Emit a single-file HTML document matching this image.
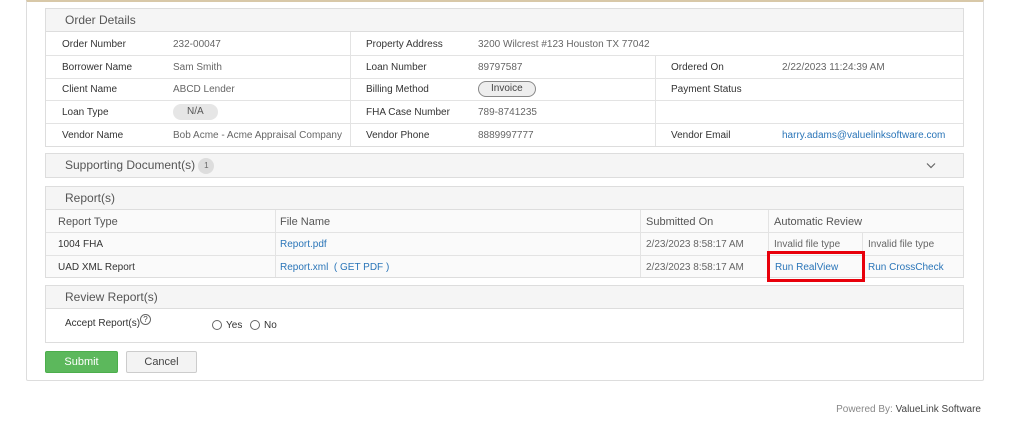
<!DOCTYPE html>
<html><head><style>
*{margin:0;padding:0;box-sizing:border-box}
body{width:1024px;height:428px;background:#fff;font-family:"Liberation Sans",sans-serif;font-size:10px;color:#444;position:relative;overflow:hidden}
.a{position:absolute}
.outer{left:26px;top:0;width:958px;height:381px;border:1px solid #ddd;border-top:2px solid #d8c8a8;border-radius:0 0 2px 2px}
.panel{position:absolute;left:45px;width:919px;border:1px solid #ddd;background:#fff}
.ph{height:23px;background:#f5f5f5;border-bottom:1px solid #ddd;padding-left:19px;line-height:23px;font-size:12px;color:#555}
.t{position:absolute;white-space:nowrap;margin-top:1px}
.lb{color:#333}
.v{color:#666}
.lk{color:#2a75b8}
.hl{position:absolute;height:1px;background:#e3e3e3}
.vl{position:absolute;width:1px;background:#e3e3e3}
.pill{display:inline-block;border-radius:10px;background:#e6e6e6;padding:0 14px;line-height:16px}
</style></head><body>
<div class="a outer"></div>

<div class="panel" style="top:8px;height:139px">
 <div class="ph">Order Details</div>
 <div class="hl" style="top:46px;left:0;width:917px"></div>
 <div class="hl" style="top:69px;left:0;width:917px"></div>
 <div class="hl" style="top:91px;left:0;width:917px"></div>
 <div class="hl" style="top:114px;left:0;width:917px"></div>
 <div class="vl" style="left:304px;top:23px;height:114px"></div>
 <div class="vl" style="left:609px;top:46px;height:91px"></div>
 <span class="t lb" style="left:16px;top:29px">Order Number</span><span class="t v" style="left:127px;top:29px">232-00047</span>
 <span class="t lb" style="left:320px;top:29px">Property Address</span><span class="t v" style="left:432px;top:29px">3200 Wilcrest #123 Houston TX 77042</span>
 <span class="t lb" style="left:16px;top:52px">Borrower Name</span><span class="t v" style="left:127px;top:52px">Sam Smith</span>
 <span class="t lb" style="left:320px;top:52px">Loan Number</span><span class="t v" style="left:432px;top:52px">89797587</span>
 <span class="t lb" style="left:625px;top:52px">Ordered On</span><span class="t v" style="left:736px;top:52px">2/22/2023 11:24:39 AM</span>
 <span class="t lb" style="left:16px;top:74px">Client Name</span><span class="t v" style="left:127px;top:74px">ABCD Lender</span>
 <span class="t lb" style="left:320px;top:74px">Billing Method</span><span class="t" style="left:432px;top:71px;border:1px solid #888;border-radius:9px;background:#eee;padding:0 12px;line-height:14px;color:#444">Invoice</span>
 <span class="t lb" style="left:625px;top:74px">Payment Status</span>
 <span class="t lb" style="left:16px;top:97px">Loan Type</span><span class="t pill" style="left:127px;top:94px;color:#555">N/A</span>
 <span class="t lb" style="left:320px;top:97px">FHA Case Number</span><span class="t v" style="left:432px;top:97px">789-8741235</span>
 <span class="t lb" style="left:16px;top:120px">Vendor Name</span><span class="t v" style="left:127px;top:120px">Bob Acme - Acme Appraisal Company</span>
 <span class="t lb" style="left:320px;top:120px">Vendor Phone</span><span class="t v" style="left:432px;top:120px">8889997777</span>
 <span class="t lb" style="left:625px;top:120px">Vendor Email</span><span class="t lk" style="left:736px;top:120px">harry.adams@valuelinksoftware.com</span>
</div>

<div class="panel" style="top:153px;height:25px">
 <div class="ph" style="border-bottom:0;background:#f5f5f5">Supporting Document(s) <span style="display:inline-block;width:16px;height:16px;border-radius:8px;background:#ddd;font-size:8px;text-align:center;line-height:16px;color:#666;vertical-align:1px">1</span></div>
 <svg class="a" style="left:880px;top:8px" width="10" height="7" viewBox="0 0 10 7"><path d="M1 1.5 L5 5.5 L9 1.5" fill="none" stroke="#666" stroke-width="1.2"/></svg>
</div>

<div class="panel" style="top:186px;height:92px">
 <div class="ph">Report(s)</div>
 <div class="a" style="left:0;top:23px;width:917px;height:67px;background:#fafafa"></div>
 <div class="hl" style="top:45px;left:0;width:917px"></div>
 <div class="hl" style="top:68px;left:0;width:917px"></div>
 <div class="vl" style="left:229px;top:23px;height:67px"></div>
 <div class="vl" style="left:594px;top:23px;height:67px"></div>
 <div class="vl" style="left:722px;top:23px;height:67px"></div>
 <div class="vl" style="left:816px;top:46px;height:44px"></div>
 <span class="t" style="left:12px;top:28px;font-size:11px;color:#555">Report Type</span>
 <span class="t" style="left:234px;top:28px;font-size:11px;color:#555">File Name</span>
 <span class="t" style="left:600px;top:28px;font-size:11px;color:#555">Submitted On</span>
 <span class="t" style="left:728px;top:28px;font-size:11px;color:#555">Automatic Review</span>
 <span class="t lb" style="left:12px;top:51px">1004 FHA</span><span class="t lk" style="left:234px;top:51px">Report.pdf</span>
 <span class="t v" style="left:600px;top:51px">2/23/2023 8:58:17 AM</span><span class="t v" style="left:728px;top:51px">Invalid file type</span><span class="t v" style="left:822px;top:51px">Invalid file type</span>
 <span class="t lb" style="left:12px;top:74px">UAD XML Report</span><span class="t lk" style="left:234px;top:74px">Report.xml &nbsp;( GET PDF )</span>
 <span class="t v" style="left:600px;top:74px">2/23/2023 8:58:17 AM</span><span class="t lk" style="left:729px;top:74px">Run RealView</span><span class="t lk" style="left:822px;top:74px">Run CrossCheck</span>
</div>
<div class="a" style="left:767px;top:251px;width:98px;height:31px;border:3px solid #e8000b"></div>

<div class="panel" style="top:285px;height:58px">
 <div class="ph">Review Report(s)</div>
 <span class="t lb" style="left:19px;top:31px">Accept Report(s)</span>
 <span class="t" style="left:94px;top:27px;width:11px;height:11px;border:1px solid #666;border-radius:50%;font-size:8px;line-height:9px;text-align:center">?</span>
 <span class="t" style="left:166px;top:33px;width:10px;height:10px;border:1px solid #666;border-radius:50%"></span><span class="t lb" style="left:180px;top:33px">Yes</span>
 <span class="t" style="left:204px;top:33px;width:10px;height:10px;border:1px solid #666;border-radius:50%"></span><span class="t lb" style="left:218px;top:33px">No</span>
</div>

<div class="a" style="left:45px;top:351px;width:73px;height:22px;background:#5cb85c;border:1px solid #4cae4c;border-radius:2px;color:#fff;text-align:center;line-height:20px;font-size:11px">Submit</div>
<div class="a" style="left:126px;top:351px;width:71px;height:22px;background:#f3f3f3;border:1px solid #ccc;border-radius:2px;color:#444;text-align:center;line-height:20px;font-size:11px">Cancel</div>

<div class="a" style="right:43px;top:404px;font-size:10px;color:#888;white-space:nowrap">Powered By: <span style="color:#444">ValueLink Software</span></div>
</body></html>
